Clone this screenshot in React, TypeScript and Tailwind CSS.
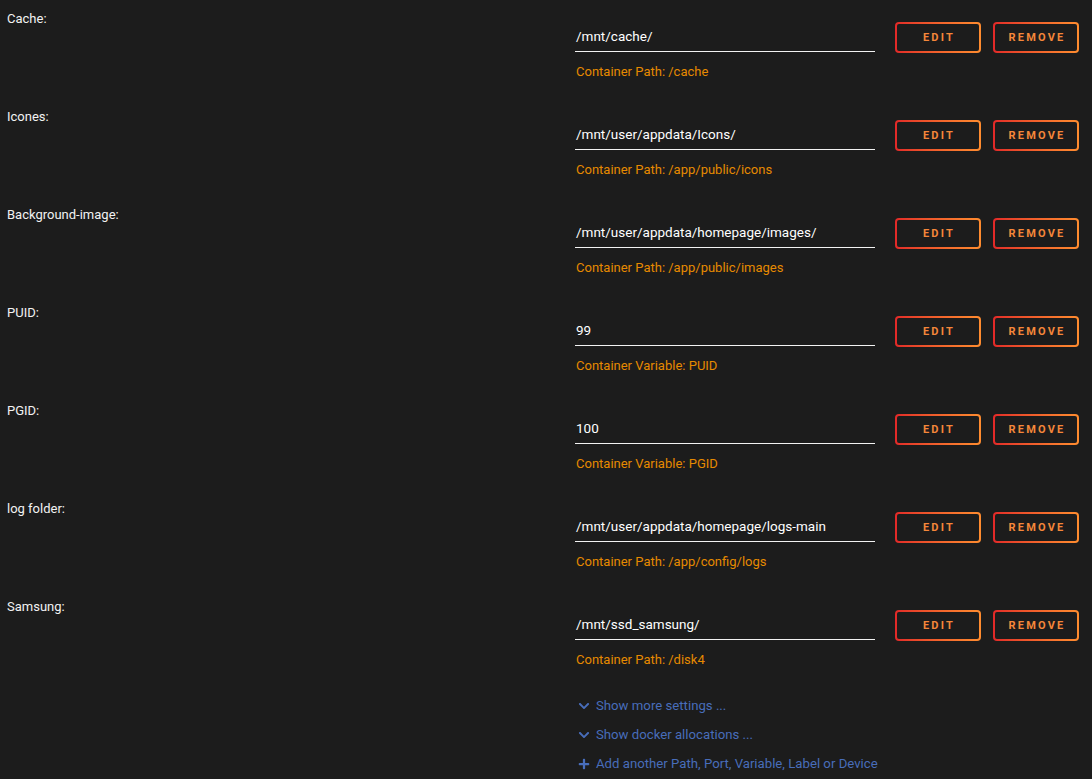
import { FaChevronDown, FaPlus } from 'react-icons/fa'

type Entry = {
  label: string
  value: string
  kind: 'Path' | 'Variable'
  target: string
}

const ENTRIES: Entry[] = [
  { label: 'Cache:', value: '/mnt/cache/', kind: 'Path', target: '/cache' },
  { label: 'Icones:', value: '/mnt/user/appdata/Icons/', kind: 'Path', target: '/app/public/icons' },
  { label: 'Background-image:', value: '/mnt/user/appdata/homepage/images/', kind: 'Path', target: '/app/public/images' },
  { label: 'PUID:', value: '99', kind: 'Variable', target: 'PUID' },
  { label: 'PGID:', value: '100', kind: 'Variable', target: 'PGID' },
  { label: 'log folder:', value: '/mnt/user/appdata/homepage/logs-main', kind: 'Path', target: '/app/config/logs' },
  { label: 'Samsung:', value: '/mnt/ssd_samsung/', kind: 'Path', target: '/disk4' },
]

function GradientButton({ children }: { children: string }) {
  return (
    <button className="h-[31px] w-[86px] rounded-[4px] bg-gradient-to-r from-[#e22828] to-[#ff8c2f] p-[2px]">
      <span className="flex h-full w-full items-center justify-center rounded-[2px] bg-[#1c1c1c] pl-[2px] pt-[2px] text-[11px] font-bold uppercase tracking-[2.2px] text-[#f5873a]">
        {children}
      </span>
    </button>
  )
}

export default function App() {
  return (
    <div
      className="min-h-[779px] w-full bg-[#1c1c1c] text-[13px] text-[#f2f2f2]"
      style={{ fontFamily: 'Roboto, "Liberation Sans", sans-serif' }}
    >
      {ENTRIES.map(({ label, value, kind, target }) => (
        <div key={label} className="flex h-[98px]">
          <div className="w-[575px] shrink-0 pl-[7px] pt-[11px] leading-4">{label}</div>
          <div className="flex flex-col pt-[22px]">
            <div className="flex items-start gap-5">
              <div className="mt-[4px] h-[26px] w-[300px] border-b border-[#f2f2f2] pb-[4px] pl-[1px] text-[13.5px] leading-[21px] text-white">
                {value}
              </div>
              <div className="flex gap-3">
                <GradientButton>Edit</GradientButton>
                <GradientButton>Remove</GradientButton>
              </div>
            </div>
            <div className="mt-[11px] pl-[1px] text-[13px] leading-4 text-[#e68a00]">
              Container {kind}: {target}
            </div>
          </div>
        </div>
      ))}
      <div className="flex flex-col gap-[13px] pl-[578px] pt-[12px] text-[13.2px] leading-4 text-[#486dba]">
        <div className="flex items-center gap-[6px]">
          <FaChevronDown className="h-[12px] w-[12px]" />
          <span>Show more settings ...</span>
        </div>
        <div className="flex items-center gap-[6px]">
          <FaChevronDown className="h-[12px] w-[12px]" />
          <span>Show docker allocations ...</span>
        </div>
        <div className="flex items-center gap-[6px]">
          <FaPlus className="h-[12px] w-[12px]" />
          <span>Add another Path, Port, Variable, Label or Device</span>
        </div>
      </div>
    </div>
  )
}
